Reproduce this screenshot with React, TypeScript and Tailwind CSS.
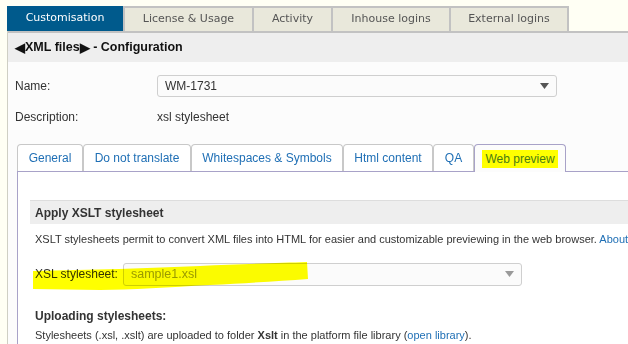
import React from 'react';

const topTabs = [
  { label: 'Customisation', w: 'w-[116px]', active: true },
  { label: 'License & Usage', w: 'w-[129px]' },
  { label: 'Activity', w: 'w-[79px]' },
  { label: 'Inhouse logins', w: 'w-[118px]' },
  { label: 'External logins', w: 'w-[120px]', last: true },
];

const innerTabs = [
  { label: 'General', w: 'w-[66px]' },
  { label: 'Do not translate', w: 'w-[108px]' },
  { label: 'Whitespaces & Symbols', w: 'w-[152px]' },
  { label: 'Html content', w: 'w-[90px]' },
  { label: 'QA', w: 'w-[41px]' },
  { label: 'Web preview', w: 'w-[92px]', active: true },
];

function Caret({ className }: { className: string }) {
  return (
    <svg width="9" height="6" viewBox="0 0 9 6" className={className}>
      <path d="M0 0h9L4.5 6z" fill="currentColor" />
    </svg>
  );
}

function FakeSelect({ value, muted, className }: { value: string; muted?: boolean; className: string }) {
  return (
    <div
      className={`flex items-center justify-between rounded-[3px] border border-[#cfcfcf] bg-[#fbfbfb] pl-[7px] pr-[7px] ${className}`}
    >
      <span className={muted ? 'text-[#9a9a9a]' : 'text-[#333]'}>{value}</span>
      <Caret className={muted ? 'text-[#9a9a9a]' : 'text-[#555]'} />
    </div>
  );
}

export default function App() {
  return (
    <div className="relative h-[344px] w-[628px] overflow-hidden bg-[#fffff4] pl-[7px] pt-[6px] font-['Liberation_Sans',Arial,sans-serif] text-[12px] text-[#333]">
      {/* Top tabs */}
      <div className="flex h-[25px]">
        {topTabs.map((t) =>
          t.active ? (
            <div
              key={t.label}
              className={`${t.w} flex items-center justify-center bg-[#005a8c] font-['DejaVu_Sans',Verdana,sans-serif] text-[11px] text-white`}
            >
              {t.label}
            </div>
          ) : (
            <div
              key={t.label}
              className={`${t.w} flex items-center justify-center border-l-2 border-t-2 border-[#c2c2c2] bg-[#e9e8db] font-['DejaVu_Sans',Verdana,sans-serif] text-[11px] text-[#555] ${t.last ? 'border-r-2' : ''}`}
            >
              {t.label}
            </div>
          ),
        )}
      </div>

      <div className="h-full border-l border-[#cfcfc4] bg-[#fcfcfc]">
        {/* Header */}
        <div className="flex h-[31px] items-center border-t-2 border-[#c2c2c2] bg-[#eeeeee] pl-[7px] text-[12.5px] font-bold text-[#111]">
          <span className="text-[13px]">◀</span>XML files<span className="text-[13px]">▶</span>&nbsp;- Configuration
        </div>

        {/* Name / Description */}
        <div className="flex items-center pl-[7px] pt-[13px]">
          <span className="w-[142px]">Name:</span>
          <FakeSelect value="WM-1731" className="h-[22px] w-[400px]" />
        </div>
        <div className="flex items-center pl-[7px] pt-[11px]">
          <span className="w-[142px]">Description:</span>
          <span>xsl stylesheet</span>
        </div>

        {/* Inner tabs */}
        <div className="ml-[9px] mt-[17px] flex h-[28px] items-end">
          {innerTabs.map((t) =>
            t.active ? (
              <div
                key={t.label}
                className={`${t.w} relative z-10 -mb-px flex h-[28px] items-center justify-center rounded-t-[4px] border border-b-0 border-[#a8a2c8] bg-[#fcfcfc]`}
              >
                <span className="bg-[#ffff00] px-[3px] text-[#4a7c14]">{t.label}</span>
              </div>
            ) : (
              <div
                key={t.label}
                className={`${t.w} flex h-[27px] items-center justify-center rounded-t-[4px] border border-b-0 border-[#c8c8c8] bg-white text-[#1f6fb5]`}
              >
                {t.label}
              </div>
            ),
          )}
        </div>

        {/* Panel */}
        <div className="ml-[9px] h-full border-l border-t border-[#a8a2c8] bg-white pl-[12px] pt-[28px]">
          <div className="flex h-[24px] items-center border-t border-[#dddddd] bg-[#eeeeee] pl-[5px] font-bold">
            Apply XSLT stylesheet
          </div>
          <div className="whitespace-nowrap pl-[5px] pt-[7px] text-[11px]">
            XSLT stylesheets permit to convert XML files into HTML for easier and customizable previewing in the web
            browser. <span className="text-[#1f6fb5]">About</span>
          </div>
          <div className="flex items-center pl-[5px] pt-[15px]">
            <span className="w-[88px]">XSL stylesheet:</span>
            <FakeSelect value="sample1.xsl" muted className="h-[23px] w-[399px] pl-[6px] text-[12.5px]" />
          </div>
          <div className="pl-[5px] pt-[21px] font-bold">Uploading stylesheets:</div>
          <div className="whitespace-nowrap pl-[5px] pt-[2px] text-[11px]">
            Stylesheets (.xsl, .xslt) are uploaded to folder <b>Xslt</b> in the platform file library (
            <span className="text-[#1f6fb5]">open library</span>).
          </div>
        </div>
      </div>

      {/* Yellow marker annotation */}
      <svg
        className="pointer-events-none absolute left-0 top-0 mix-blend-multiply"
        width="628"
        height="344"
        viewBox="0 0 628 344"
      >
        <path
          d="M33 271 C90 270 150 268 200 266 C240 264 280 263 307 262 L308 279 C280 281 250 283 210 285 C170 287 130 290 100 290 L33 289 Z"
          fill="#ffff00"
        />
      </svg>
    </div>
  );
}
